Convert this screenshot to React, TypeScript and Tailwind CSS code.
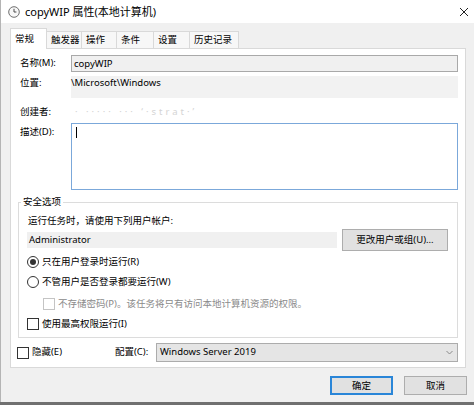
import React from 'react';

const tabs = [
  { label: '常规', w: 'w-[37px]' },
  { label: '触发器', w: 'w-[35px]' },
  { label: '操作', w: 'w-[35px]' },
  { label: '条件', w: 'w-[37px]' },
  { label: '设置', w: 'w-[36px]' },
  { label: '历史记录', w: 'w-[49px]' },
];

const ClockIcon = () => (
  <svg width="12" height="12" viewBox="0 0 12 12">
    <circle cx="6" cy="6" r="5.3" fill="#f7f7f7" stroke="#6f6f6f" strokeWidth="1" />
    <path d="M6 2.8V6h2.4" fill="none" stroke="#4a4a4a" strokeWidth="1" />
  </svg>
);

const Radio = ({ checked }: { checked?: boolean }) => (
  <span className="w-[12px] h-[12px] rounded-full border border-[#333] bg-white flex items-center justify-center shrink-0">
    {checked && <span className="w-[6px] h-[6px] rounded-full bg-[#333]" />}
  </span>
);

const Check = ({ disabled }: { disabled?: boolean }) => (
  <span
    className={
      disabled
        ? 'w-[12px] h-[12px] border border-[#c4c4c4] bg-white shrink-0'
        : 'w-[12px] h-[12px] border border-[#333] bg-white shrink-0'
    }
  />
);

export default function App() {
  return (
    <div className="w-[474px] h-[405px] bg-[#707070] overflow-hidden font-['Noto_Sans','Noto_Sans_CJK_SC',sans-serif] text-[9.5px] text-black">
      <div className="h-[402px] bg-[#f0f0f0] border-l border-[#b4b4b4] flex flex-col">
        {/* title bar */}
        <div className="h-[23px] bg-white flex items-center pl-[7px] pr-[5px]">
          <ClockIcon />
          <span className="ml-[5px] text-[11px] leading-[14px]">copyWIP 属性(本地计算机)</span>
          <svg className="ml-auto" width="10" height="10" viewBox="0 0 10 10">
            <path d="M1 1L9 9M9 1L1 9" stroke="#222" strokeWidth="1" />
          </svg>
        </div>

        {/* tab strip */}
        <div className="h-[25px] flex items-end pl-[9px] relative z-10">
          {tabs.map((t, i) =>
            i === 0 ? (
              <div
                key={t.label}
                className={`${t.w} h-[21px] -mb-px bg-white border border-b-0 border-[#d9d9d9] pl-[4px] pt-[4px] leading-[12px]`}
              >
                {t.label}
              </div>
            ) : (
              <div
                key={t.label}
                className={`${t.w} h-[17px] bg-[#f7f7f7] border border-l-0 border-b-0 border-[#d9d9d9] pl-[4px] pt-[2px] leading-[12px]`}
              >
                {t.label}
              </div>
            )
          )}
        </div>

        {/* tab page */}
        <div className="ml-[9px] w-[456px] h-[320px] bg-white border border-[#d9d9d9] pl-[7px] pr-[7px] pt-[6px] flex flex-col">
          <div className="flex items-center h-[17px]">
            <span className="w-[53px] pl-[2px]">名称(M):</span>
            <div className="flex-1 h-[17px] border border-[#a9a9a9] bg-[#f0f0f0] pl-[2px] leading-[15px]">copyWIP</div>
          </div>

          <div className="flex items-start h-[22px] mt-[4px]">
            <span className="w-[53px] pl-[2px] pt-[1px] leading-[12px]">位置:</span>
            <div className="flex-1 h-[22px] bg-[#f2f2f2] pt-[1px] leading-[12px]">\Microsoft\Windows</div>
          </div>

          <div className="flex items-center h-[20px] mt-[4px]">
            <span className="w-[53px] pl-[2px]">创建者:</span>
            <span className="pl-[4px] text-[#d4d4d4] tracking-[3px]">
              ·   ·····   ···   ‘·strat·’
            </span>
          </div>

          <div className="flex items-start mt-[1px]">
            <span className="w-[53px] pl-[2px] pt-[3px] leading-[12px]">描述(D):</span>
            <div className="flex-1 h-[67px] border border-[#7ba8da] bg-white pl-[4px] pt-[3px]">
              <div className="w-px h-[11px] bg-black" />
            </div>
          </div>

          <fieldset className="mt-[5px] border border-[#dcdcdc] pl-[8px] pr-[9px] pb-[6px]">
            <legend className="-ml-[6px] px-[2px] leading-[14px]">安全选项</legend>
            <div className="mt-[6px] ml-[1px] leading-[12px]">运行任务时，请使用下列用户帐户:</div>
            <div className="mt-[2px] h-[22px] flex items-center">
              <div className="w-[310px] h-[16px] bg-[#f0f0f0] pl-[2px] leading-[16px]">Administrator</div>
              <button className="ml-[5px] w-[106px] h-[22px] bg-[#e1e1e1] border border-[#adadad] leading-[12px]">
                更改用户或组(U)...
              </button>
            </div>
            <div className="mt-[4px] h-[14px] flex items-center gap-[3px]">
              <Radio checked />
              <span>只在用户登录时运行(R)</span>
            </div>
            <div className="mt-[6px] h-[14px] flex items-center gap-[3px]">
              <Radio />
              <span>不管用户是否登录都要运行(W)</span>
            </div>
            <div className="mt-[8px] h-[14px] flex items-center gap-[3px] pl-[16px]">
              <Check disabled />
              <span className="text-[#8a8a8a]">不存储密码(P)。该任务将只有访问本地计算机资源的权限。</span>
            </div>
            <div className="mt-[6px] h-[14px] flex items-center gap-[3px]">
              <Check />
              <span>使用最高权限运行(I)</span>
            </div>
          </fieldset>

          <div className="mt-[5px] h-[19px] flex items-center -ml-px">
            <Check />
            <span className="ml-[3px]">隐藏(E)</span>
            <span className="ml-[53px]">配置(C):</span>
            <div className="ml-auto w-[302px] h-[19px] bg-[#e5e5e5] border border-[#acacac] flex items-center pl-[3px] pr-[4px]">
              <span>Windows Server 2019</span>
              <svg className="ml-auto" width="7" height="5" viewBox="0 0 7 5">
                <path d="M0.5 1L3.5 4L6.5 1" fill="none" stroke="#8a8a8a" strokeWidth="1" />
              </svg>
            </div>
          </div>
        </div>

        {/* dialog buttons */}
        <div className="mt-[8px] flex justify-end gap-[11px] pr-[7px]">
          <button className="w-[63px] h-[19px] bg-[#e1e1e1] border-2 border-[#2a86d8] leading-[12px]">确定</button>
          <button className="w-[63px] h-[19px] bg-[#e1e1e1] border border-[#adadad] leading-[12px]">取消</button>
        </div>
      </div>
    </div>
  );
}
